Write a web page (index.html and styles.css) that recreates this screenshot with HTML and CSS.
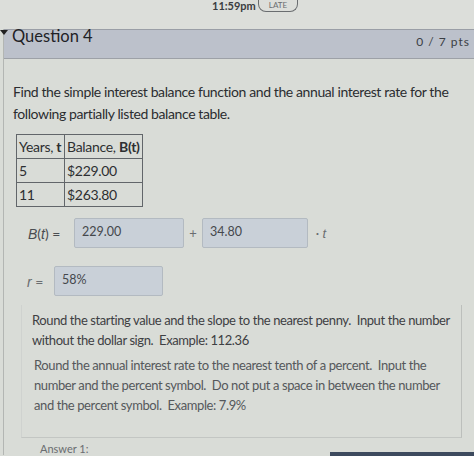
FILE: index.html
```html
<!DOCTYPE html>
<html>
<head>
<meta charset="utf-8">
<link rel="stylesheet" href="styles.css">
</head>
<body>
<div class="topstrip">
  <span class="due">11:59pm</span>
  <span class="late">LATE</span>
</div>
<div class="card">
  <div class="qhead">
    <span class="caret"></span>
    <span class="qtitle">Question 4</span>
    <span class="pts">0 / 7 pts</span>
  </div>
  <div class="qbody">
    <p class="prompt">Find the simple interest balance function and the annual interest rate for the following partially listed balance table.</p>
    <table class="tbl">
      <tr><td class="c1">Years, <b>t</b></td><td class="c2">Balance, <b>B(t)</b></td></tr>
      <tr><td class="c1">5</td><td class="c2">$229.00</td></tr>
      <tr><td class="c1">11</td><td class="c2">$263.80</td></tr>
    </table>
    <div class="eqrow">
      <span class="lbl lbl-b"><i>B</i>(<i>t</i>) =</span>
      <span class="box box1">229.00</span>
      <span class="op">+</span>
      <span class="box box2">34.80</span>
      <span class="op dot">· <i>t</i></span>
    </div>
    <div class="eqrow eqrow2">
      <span class="lbl lbl-r"><i>r</i> =</span>
      <span class="box box3">58%</span>
    </div>
    <div class="note">
      <p class="n1">Round the starting value and the slope to the nearest penny.&nbsp; Input the number without the dollar sign.&nbsp; Example: 112.36</p>
      <p class="n2">Round the annual interest rate to the nearest tenth of a percent.&nbsp; Input the number and the percent symbol.&nbsp; Do not put a space in between the number and the percent symbol.&nbsp; Example: 7.9%</p>
    </div>
    <div class="answer">Answer 1:</div>
  </div>
</div>
<div class="bottombar"></div>
</body>
</html>
```
FILE: styles.css
```css
html, body {
  margin: 0;
  padding: 0;
}
body {
  width: 474px;
  height: 456px;
  overflow: hidden;
  background: #d9dcd7;
  font-family: Lato, "Open Sans", sans-serif;
  color: #2f3133;
  position: relative;
}
.topstrip {
  height: 29px;
  background: #dcdeda;
  position: relative;
}
.due {
  position: absolute;
  left: 212px;
  top: 0;
  font-size: 11px;
  line-height: 12px;
  font-weight: 700;
  color: #3a3c40;
}
.late {
  position: absolute;
  left: 258px;
  top: 0;
  width: 38px;
  height: 11px;
  border: 1px solid #6a6d70;
  border-top: none;
  border-radius: 0 0 8px 8px;
  font-size: 8px;
  text-align: center;
  line-height: 11px;
  color: #6a6d70;
}
.card {
  border-left: 1px solid #b3b6b3;
  margin-left: 3px;
}
.qhead {
  height: 28px;
  background: #bcc1cb;
  border-top: 1px solid #9a9ea6;
  border-bottom: 1px solid #9da1a7;
  display: flex;
  align-items: flex-start;
  position: relative;
}
.caret {
  position: absolute;
  left: -4px;
  top: 0;
  width: 0;
  height: 0;
  border-left: 4px solid transparent;
  border-right: 4px solid transparent;
  border-top: 5px solid #222;
}
.qtitle {
  margin-left: 8px;
  margin-top: -3px;
  font-size: 16.5px;
  line-height: 18px;
  color: #1f2226;
}
.pts {
  margin-left: auto;
  margin-right: 4px;
  margin-top: 4px;
  font-size: 12px;
  color: #3b3e44;
  letter-spacing: 1px;
}
.qbody {
  padding: 22px 10px 0 9px;
}
.prompt {
  margin: 0;
  font-size: 14px;
  line-height: 22px;
  letter-spacing: -0.4px;
  color: #2b2d30;
  width: 445px;
}
.tbl {
  margin-top: 9px;
  margin-left: 3px;
  border-collapse: collapse;
  table-layout: fixed;
  font-size: 14px;
  letter-spacing: -0.3px;
  color: #2d2f31;
}
.tbl td {
  border: 1px solid #62666a;
  height: 23px;
  padding: 0 2px;
  white-space: nowrap;
  overflow: hidden;
}
.tbl td.c1 {
  width: 43px;
}
.tbl td.c2 {
  width: 73px;
}
.eqrow {
  display: flex;
  align-items: center;
  margin-top: 11px;
  height: 30px;
}
.eqrow2 {
  margin-top: 18px;
}
.lbl {
  font-size: 14px;
  color: #4a4d51;
}
.lbl i, .dot i {
  font-family: "Liberation Sans", sans-serif;
  font-style: italic;
}
.lbl-b {
  margin-left: 15px;
  width: 46px;
}
.lbl-r {
  margin-left: 14px;
  width: 27px;
  color: #6a6d70;
}
.box {
  box-sizing: border-box;
  height: 30px;
  background: #c9d0d8;
  border: 1px solid #b3bac1;
  border-radius: 2px;
  font-size: 12.5px;
  line-height: 26px;
  color: #45484c;
  padding: 0 0 0 7px;
}
.box1 { width: 110px; }
.box2 { width: 106px; }
.box3 { width: 109px; }
.op {
  width: 18px;
  text-align: center;
  font-size: 13px;
  color: #6a6d70;
}
.dot {
  margin-left: 4px;
}
.note {
  margin: 9px 2px 0 8px;
  border-left: 1px solid #cfd2cf;
  border-right: 1px solid #bcbfbc;
  border-bottom: 1px solid #c3c6c3;
  padding: 5px 6px 0 10px;
  font-size: 13px;
  line-height: 20px;
  letter-spacing: -0.4px;
  color: #4a4c4f;
  height: 127px;
}
.note p {
  margin: 0;
}
.n1 {
  color: #3e4043;
}
.n2 {
  margin-top: 5px !important;
  padding-left: 2px;
  color: #55585b;
}
.answer {
  margin-top: 4px;
  margin-left: 27px;
  font-size: 11px;
  color: #6a6d70;
}
.bottombar {
  position: absolute;
  left: 330px;
  bottom: 0;
  width: 144px;
  height: 4px;
  background: #3d4a5e;
}
```
